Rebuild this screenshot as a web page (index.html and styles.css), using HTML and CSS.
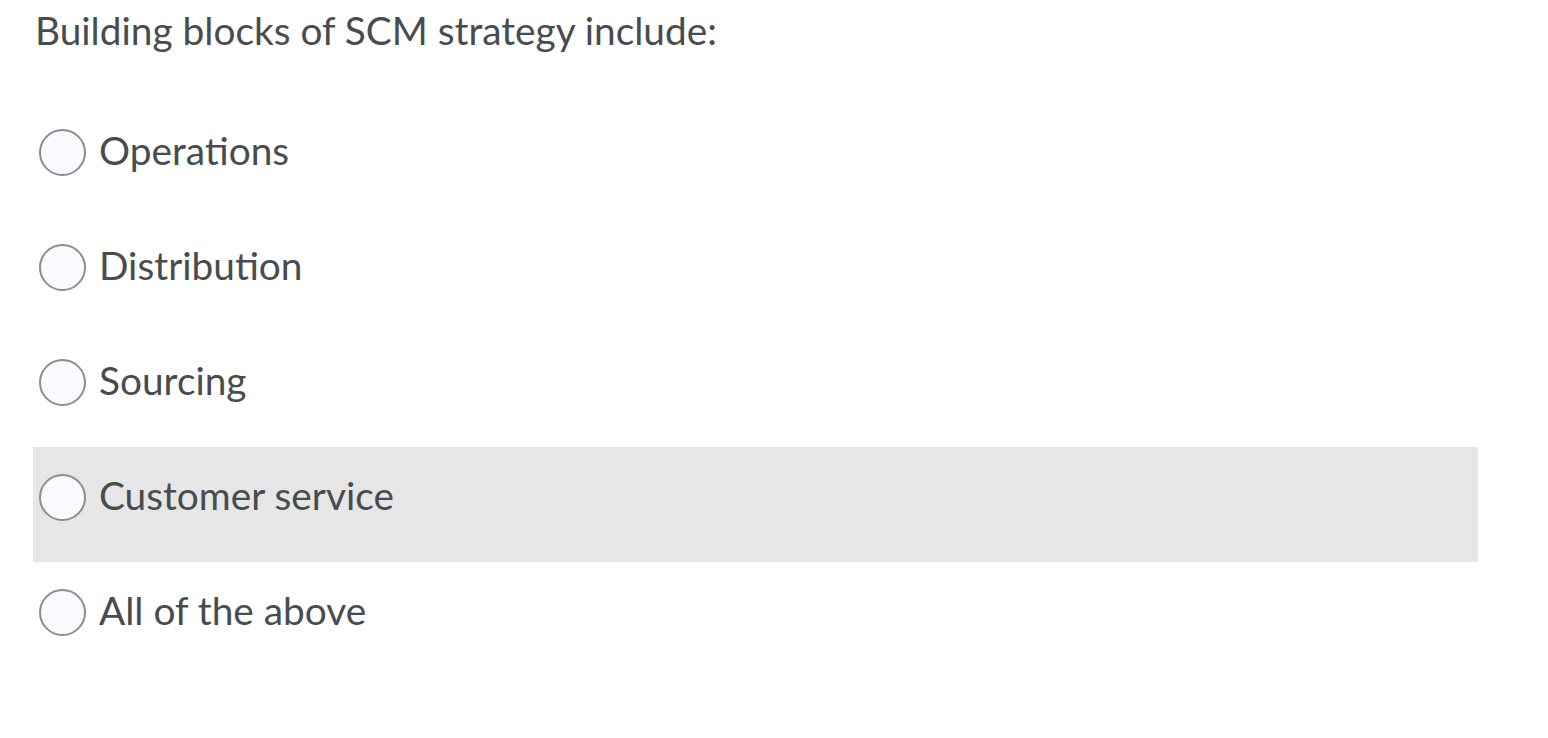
FILE: index.html
```html
<!DOCTYPE html>
<html>
<head>
<meta charset="utf-8">
<link rel="stylesheet" href="styles.css">
</head>
<body>
<div class="question">
  <div class="prompt">Building blocks of SCM strategy include:</div>
  <div class="options">
    <label class="option"><span class="radio"></span><span class="text">Operations</span></label>
    <label class="option"><span class="radio"></span><span class="text">Distribution</span></label>
    <label class="option"><span class="radio"></span><span class="text">Sourcing</span></label>
    <label class="option hover"><span class="radio"></span><span class="text">Customer service</span></label>
    <label class="option"><span class="radio"></span><span class="text">All of the above</span></label>
  </div>
</div>
</body>
</html>
```
FILE: styles.css
```css
html, body {
  margin: 0;
  padding: 0;
  background: #ffffff;
}
body {
  font-family: Lato, "Open Sans", sans-serif;
  color: #494c4e;
}
.question {
  width: 1445px;
  padding-left: 33px;
}
.prompt {
  box-sizing: border-box;
  font-size: 38.8px;
  line-height: 44px;
  padding-top: 8px;
  padding-left: 2px;
  height: 102px;
}
.options {
  display: flex;
  flex-direction: column;
}
.option {
  box-sizing: border-box;
  display: flex;
  align-items: center;
  height: 115px;
  padding-bottom: 14px;
  font-size: 38.8px;
}
.option.hover {
  background: #e6e6e6;
}
.radio {
  box-sizing: border-box;
  width: 47px;
  height: 47px;
  border: 2px solid #8b8d90;
  border-radius: 50%;
  background: #f9fafe;
  margin-left: 6px;
  margin-right: 13px;
  flex: none;
}
.text {
  line-height: 44px;
  margin-bottom: 5px;
}
```
